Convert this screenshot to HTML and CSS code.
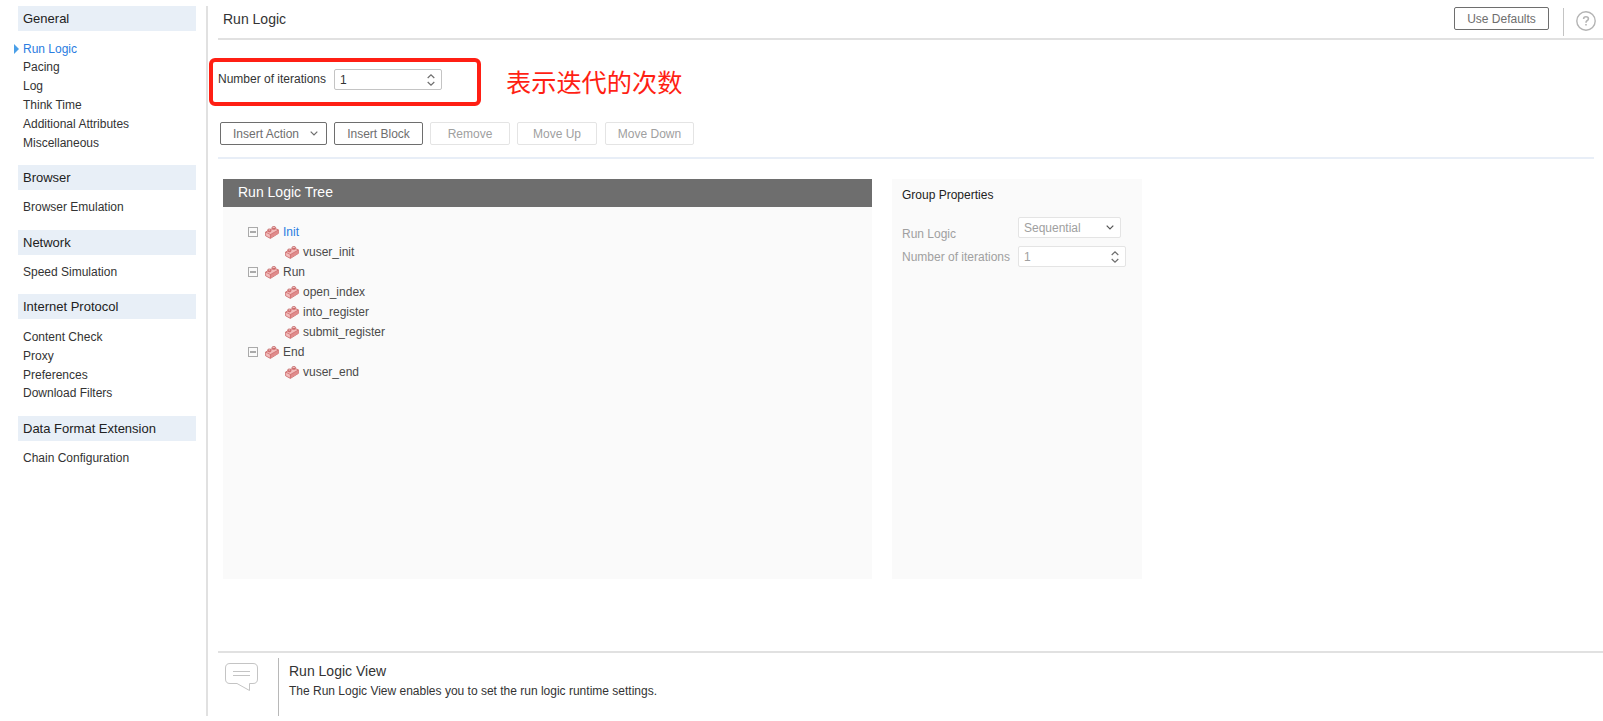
FILE: index.html
```
<!DOCTYPE html>
<html lang="en">
<head>
  <meta charset="UTF-8" />
  <title>Runtime Settings - Run Logic</title>
  <link rel="stylesheet" href="styles.css">
</head>
<body>
  <svg width="0" height="0" class="sprite">
    <symbol id="brick" viewBox="0 0 14 13">
      <path d="M0.6 6 L8.5 1.8 L13.4 3.8 V7.4 L5.4 12.4 L0.6 9.8 Z" fill="#f3bcbc" stroke="#c96464" stroke-width="0.8"/>
      <path d="M5.4 8.6 L13.2 4.2 V7.4 L5.4 12 Z" fill="#e08c8c"/>
      <path d="M0.8 6.2 L5.4 8.5 L13.2 4.1 M5.4 8.5 V12.2" fill="none" stroke="#c96464" stroke-width="0.7"/>
      <path d="M2.6 4 V5.8 Q4.4 7 6.2 5.8 V4 Z M7 1.5 V3.4 Q8.8 4.5 10.6 3.4 V1.5 Z" fill="#d98080"/>
      <ellipse cx="4.4" cy="4" rx="1.8" ry="1" fill="#f3c4c4" stroke="#b84e4e" stroke-width="0.7"/>
      <ellipse cx="8.8" cy="1.5" rx="1.8" ry="1" fill="#f3c4c4" stroke="#b84e4e" stroke-width="0.7"/>
    </symbol>
    <symbol id="down" viewBox="0 0 8 5">
      <path d="M0.7 0.7 L4 4 L7.3 0.7" fill="none" stroke="currentColor" stroke-width="1.2"/>
    </symbol>
    <symbol id="updown" viewBox="0 0 8 12">
      <path d="M0.7 4 L4 0.9 L7.3 4 M0.7 8 L4 11.1 L7.3 8" fill="none" stroke="currentColor" stroke-width="1.2"/>
    </symbol>
  </svg>

  <div class="page">
    <nav class="sidebar">
      <h2>General</h2>
      <ul>
        <li class="active">Run Logic</li>
        <li>Pacing</li>
        <li>Log</li>
        <li>Think Time</li>
        <li>Additional Attributes</li>
        <li>Miscellaneous</li>
      </ul>
      <h2>Browser</h2>
      <ul>
        <li>Browser Emulation</li>
      </ul>
      <h2>Network</h2>
      <ul>
        <li>Speed Simulation</li>
      </ul>
      <h2>Internet Protocol</h2>
      <ul>
        <li>Content Check</li>
        <li>Proxy</li>
        <li>Preferences</li>
        <li>Download Filters</li>
      </ul>
      <h2>Data Format Extension</h2>
      <ul>
        <li>Chain Configuration</li>
      </ul>
    </nav>

    <main class="main">
      <header class="header">
        <h1>Run Logic</h1>
        <button class="btn">Use Defaults</button>
        <span class="header-sep"></span>
        <svg class="help" viewBox="0 0 20 20">
          <circle cx="10" cy="10" r="9.2" fill="none" stroke="#b4b4b4" stroke-width="1.4"/>
          <path d="M7.6 8 Q7.6 5.8 10 5.8 Q12.4 5.8 12.4 7.8 Q12.4 9 11 9.8 Q10 10.4 10 11.7 M10 13 V14.6" fill="none" stroke="#b4b4b4" stroke-width="1.6"/>
        </svg>
      </header>

      <div class="iterations">
        <div class="marked">
          <label>Number of iterations</label>
          <div class="field spinner">1<svg class="updown"><use href="#updown"/></svg></div>
        </div>
        <span class="note">表示迭代的次数</span>
      </div>

      <div class="toolbar">
        <button class="btn insert-action">Insert Action<svg class="down"><use href="#down"/></svg></button>
        <button class="btn insert-block">Insert Block</button>
        <button class="btn remove" disabled>Remove</button>
        <button class="btn move-up" disabled>Move Up</button>
        <button class="btn move-down" disabled>Move Down</button>
      </div>

      <div class="panels">
        <section class="tree-panel">
          <h3>Run Logic Tree</h3>
          <ul class="tree">
            <li class="active"><i class="toggle"></i><svg class="brick"><use href="#brick"/></svg>Init</li>
            <li class="child"><svg class="brick"><use href="#brick"/></svg>vuser_init</li>
            <li><i class="toggle"></i><svg class="brick"><use href="#brick"/></svg>Run</li>
            <li class="child"><svg class="brick"><use href="#brick"/></svg>open_index</li>
            <li class="child"><svg class="brick"><use href="#brick"/></svg>into_register</li>
            <li class="child"><svg class="brick"><use href="#brick"/></svg>submit_register</li>
            <li><i class="toggle"></i><svg class="brick"><use href="#brick"/></svg>End</li>
            <li class="child"><svg class="brick"><use href="#brick"/></svg>vuser_end</li>
          </ul>
        </section>

        <section class="props">
          <h4>Group Properties</h4>
          <div class="prop">
            <label class="low">Run Logic</label>
            <div class="field select">Sequential<svg class="down"><use href="#down"/></svg></div>
          </div>
          <div class="prop">
            <label>Number of iterations</label>
            <div class="field spinner">1<svg class="updown"><use href="#updown"/></svg></div>
          </div>
        </section>
      </div>

      <footer class="footer">
        <svg class="bubble" viewBox="0 0 33 28">
          <path d="M5 0.5 H28 Q32.5 0.5 32.5 5 V16 Q32.5 20.5 28 20.5 H24.5 V27.5 L12 20.5 H5 Q0.5 20.5 0.5 16 V5 Q0.5 0.5 5 0.5 Z M8 8.5 H25 M8 12.5 H25" fill="none" stroke="#c4c4c4"/>
        </svg>
        <div class="description">
          <h5>Run Logic View</h5>
          <p>The Run Logic View enables you to set the run logic runtime settings.</p>
        </div>
      </footer>
    </main>
  </div>
</body>
</html>
```
FILE: styles.css
```
* {
  box-sizing: border-box;
  margin: 0;
  padding: 0;
}
body {
  font-family: "Liberation Sans", Arial, sans-serif;
  font-size: 12px;
  color: #333;
  background: #fff;
}
h1, h2, h3, h4, h5 {
  font-weight: normal;
}
ul {
  list-style: none;
}
.sprite {
  display: block;
}
.page {
  display: flex;
  height: 721px;
  padding: 6px 0 5px;
}

/* sidebar */
.sidebar {
  width: 206px;
  padding: 0 10px 0 18px;
}
.sidebar h2 {
  height: 25px;
  padding-left: 5px;
  font-size: 13px;
  line-height: 25px;
  color: #222;
  background: #e8eff7;
}
.sidebar ul {
  padding: 8.7px 0 12.3px 5px;
}
.sidebar li {
  position: relative;
  height: 18.8px;
  line-height: 19px;
}
.sidebar .active,
.tree .active {
  color: #2a7de1;
}
.sidebar .active::before {
  content: "";
  position: absolute;
  left: -9px;
  top: 4px;
  border: 5px solid transparent;
  border-left-color: #4a9fe8;
  border-right: 0;
}

/* main area */
.main {
  flex: 1;
  display: flex;
  flex-direction: column;
  border-left: 2px solid #e1e1e1;
  padding-left: 10px;
}
.header {
  display: flex;
  align-items: flex-start;
  height: 34px;
  padding: 1px 7px 0 5px;
  border-bottom: 2px solid #e1e1e1;
}
.header h1 {
  flex: 1;
  font-size: 14px;
  line-height: 24px;
}
.header .btn {
  width: 95px;
}
.header-sep {
  width: 1px;
  height: 28px;
  margin: 1px 12px 0 14px;
  background: #c4c4c4;
}
.help {
  width: 20px;
  height: 20px;
  margin-top: 4px;
}
.btn {
  height: 23px;
  padding-top: 1px;
  border: 1px solid #6e6e6e;
  border-radius: 2px;
  background: #fff;
  color: #6e6e6e;
  font-family: inherit;
  font-size: 12px;
  line-height: 20px;
}
.btn:disabled {
  border-color: #e4e4e4;
  color: #a0a0a0;
}
.down {
  width: 8px;
  height: 5px;
}
.updown {
  width: 8px;
  height: 12px;
  color: #6e6e6e;
}
.field {
  display: flex;
  align-items: center;
  justify-content: space-between;
  height: 21px;
  padding: 0 6px 0 5px;
  border: 1px solid #c4c4c4;
  border-radius: 2px;
  background: #fff;
}
.spinner {
  width: 108px;
}
.iterations {
  display: flex;
  align-items: center;
  height: 48px;
  margin: 18px 0 0 -9px;
}
.marked {
  display: flex;
  align-items: flex-start;
  width: 272px;
  height: 48px;
  padding: 7px 0 0 5px;
  border: 4px solid #ff1f14;
  border-radius: 6px;
}
.marked label {
  width: 116px;
  line-height: 20px;
}
.note {
  margin: 2px 0 0 25px;
  font-family: "Liberation Sans", "Noto Sans CJK SC", sans-serif;
  font-size: 25.2px;
  line-height: 30px;
  color: #ff1f14;
}

.toolbar {
  display: flex;
  gap: 7px;
  height: 53px;
  padding: 16px 0 0 2px;
  margin-right: 9px;
  border-bottom: 2px solid #e8eef7;
}
.insert-action {
  width: 107px;
  padding-left: 4px;
}
.insert-action .down {
  margin: 0 0 2px 11px;
}
.insert-block {
  width: 89px;
}
.remove,
.move-up {
  width: 80px;
}
.move-down {
  width: 89px;
  margin-left: 1px;
}

.panels {
  flex: 1;
  display: flex;
  align-items: flex-start;
  gap: 20px;
  padding: 20px 0 0 5px;
}
.tree-panel {
  width: 649px;
  height: 400px;
  background: #fafafa;
}
.tree-panel h3 {
  height: 28px;
  padding-left: 15px;
  font-size: 14px;
  line-height: 26px;
  color: #fff;
  background: #6e6e6e;
}
.tree {
  padding: 15px 0 0 25px;
}
.tree li {
  display: flex;
  align-items: center;
  height: 20px;
  line-height: 20px;
  color: #4a4a4a;
}
.tree .child {
  padding-left: 37px;
}
.toggle {
  width: 10px;
  height: 10px;
  margin-right: 7px;
  border: 1px solid #aaa;
  background: linear-gradient(#aaa, #aaa) center / 6px 2px no-repeat;
}
.brick {
  width: 14px;
  height: 13px;
  margin-right: 4px;
}
.props {
  width: 250px;
  height: 400px;
  padding: 6px 10px 0;
  background: #fafafa;
  color: #a0a0a0;
}
.props h4 {
  margin-bottom: 12px;
  font-size: 12px;
  line-height: 20px;
  color: #222;
}
.prop {
  display: flex;
  height: 29px;
}
.prop label {
  width: 116px;
  padding-top: 1px;
  line-height: 21px;
}
.prop .low {
  padding-top: 7px;
}
.prop .field {
  border-color: #e4e4e4;
}
.select {
  width: 103px;
}
.select .down {
  color: #555;
}

/* description bar */
.footer {
  display: flex;
  height: 65px;
  padding: 5px 0 0 7px;
  border-top: 2px solid #e1e1e1;
}
.bubble {
  width: 33px;
  height: 28px;
  margin: 5px 20px 0 0;
}
.description {
  padding-left: 10px;
  border-left: 1px solid #b8b8b8;
}
.description h5 {
  margin-top: 3px;
  font-size: 14px;
  line-height: 20px;
}
.description p {
  line-height: 21px;
}
```
